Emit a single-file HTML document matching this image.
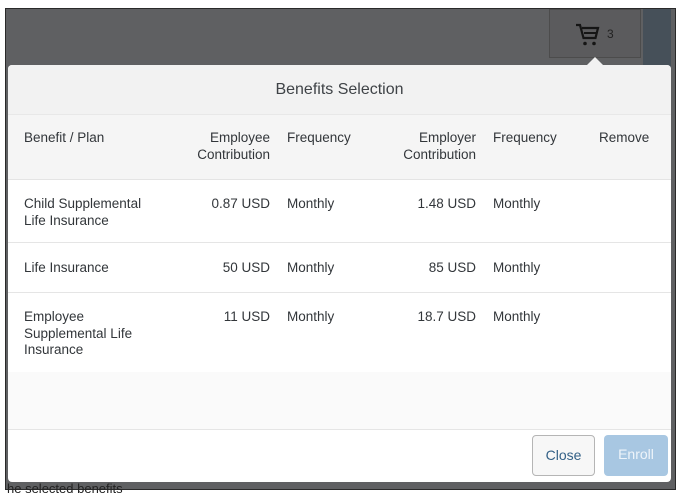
<!DOCTYPE html>
<html><head><meta charset="utf-8"><style>
*{margin:0;padding:0;box-sizing:border-box}
body{width:682px;height:496px;background:#fff;position:relative;overflow:hidden;font-family:"Liberation Sans",sans-serif;color:#32363a;font-size:13.5px}
.frame{position:absolute;left:5px;top:8px;width:671px;height:482px;background:#5f6062;border:1px solid #2a2a2a}
.strip{position:absolute;left:643px;top:9px;width:28px;height:470px;background:#465059}
.cartbtn{position:absolute;left:549px;top:9px;width:92px;height:49px;border:1px solid #4c4c4c;background:#5b5b5d}
.dlg{position:absolute;left:8px;top:65px;width:663px;height:417px;background:#fff;border-radius:4px;overflow:hidden}
.hd{position:absolute;left:0;top:0;width:663px;height:50px;background:#f2f2f2;text-align:center;line-height:50px;font-size:16px;color:#3f4347;border-bottom:1px solid #e8e8e8}
.th{position:absolute;left:0;top:50px;width:663px;height:65px;background:#f5f5f5;border-bottom:1px solid #e4e4e4}
.row{position:absolute;left:0;width:663px;background:#fff;border-bottom:1px solid #e5e5e5}
.empty{position:absolute;left:0;top:307px;width:663px;height:58px;background:#fafafa;border-bottom:1px solid #e5e5e5}
.t{position:absolute;line-height:16.5px;white-space:nowrap}
.r{text-align:right}
.btn{position:absolute;top:370px;height:41px;border-radius:4px;font-size:14px;line-height:39px;text-align:center}
.under{position:absolute;left:7px;top:482px;font-size:13px;color:#222;line-height:14px}
</style></head><body>
<div class="frame"></div>
<div class="strip"></div>
<div class="cartbtn">
<svg style="position:absolute;left:25px;top:13px" width="26" height="24" viewBox="0 0 26 24"><path d="M1 2h4l3.5 13h12l2.5-10H7" fill="none" stroke="#151515" stroke-width="2.2"/><path d="M9 10h13" stroke="#151515" stroke-width="2"/><circle cx="10" cy="20.5" r="1.8" fill="#151515"/><circle cx="19" cy="20.5" r="1.8" fill="#151515"/></svg>
<span style="position:absolute;left:57px;top:17px;font-size:12px;color:#222">3</span>
</div>
<div class="under">he selected benefits</div>
<div style="position:absolute;left:587px;top:57px;width:0;height:0;border-left:8px solid transparent;border-right:8px solid transparent;border-bottom:8px solid #f2f2f2"></div>
<div class="dlg">
<div class="hd">Benefits Selection</div>
<div class="th">
<div class="t" style="left:16px;top:15px">Benefit / Plan</div>
<div class="t r" style="right:401px;top:15px">Employee<br>Contribution</div>
<div class="t" style="left:279px;top:15px">Frequency</div>
<div class="t r" style="right:195px;top:15px">Employer<br>Contribution</div>
<div class="t" style="left:485px;top:15px">Frequency</div>
<div class="t" style="left:591px;top:15px">Remove</div>
</div>
<div class="row" style="top:115px;height:63px">
<div class="t" style="left:16px;top:16px">Child Supplemental<br>Life Insurance</div>
<div class="t r" style="right:401px;top:16px">0.87 USD</div>
<div class="t" style="left:279px;top:16px">Monthly</div>
<div class="t r" style="right:195px;top:16px">1.48 USD</div>
<div class="t" style="left:485px;top:16px">Monthly</div>
</div>
<div class="row" style="top:178px;height:50px">
<div class="t" style="left:16px;top:17px">Life Insurance</div>
<div class="t r" style="right:401px;top:17px">50 USD</div>
<div class="t" style="left:279px;top:17px">Monthly</div>
<div class="t r" style="right:195px;top:17px">85 USD</div>
<div class="t" style="left:485px;top:17px">Monthly</div>
</div>
<div class="row" style="top:228px;height:79px;border-bottom:none">
<div class="t" style="left:16px;top:16px">Employee<br>Supplemental Life<br>Insurance</div>
<div class="t r" style="right:401px;top:16px">11 USD</div>
<div class="t" style="left:279px;top:16px">Monthly</div>
<div class="t r" style="right:195px;top:16px">18.7 USD</div>
<div class="t" style="left:485px;top:16px">Monthly</div>
</div>
<div class="empty"></div>
<div class="btn" style="left:524px;width:63px;border:1px solid #b5b5b5;background:#f7f7f7;color:#346187">Close</div>
<div class="btn" style="left:596px;width:64px;background:#a8c7e2;color:#eef4fa">Enroll</div>
</div>
</body></html>
